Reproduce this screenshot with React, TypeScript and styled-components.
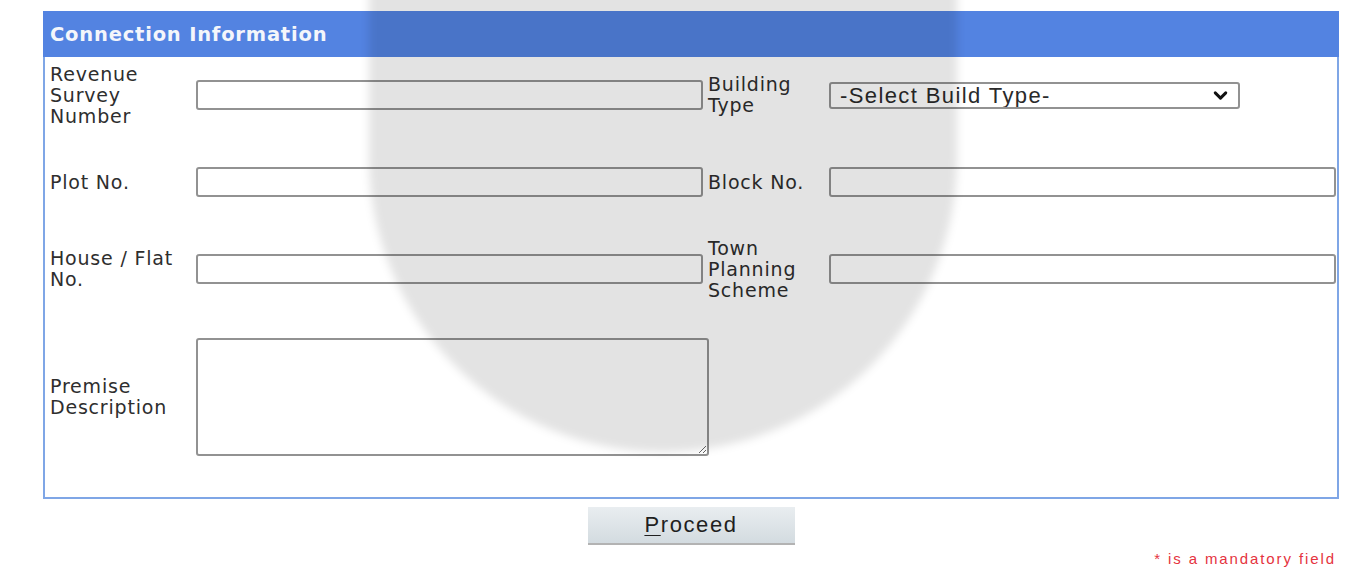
import React from 'react';
import styled, { createGlobalStyle } from 'styled-components';
import { ChevronDown } from 'lucide-react';

const GlobalStyle = createGlobalStyle`
  html, body {
    margin: 0;
    padding: 0;
    background: #ffffff;
  }
  body {
    font-family: "DejaVu Sans", Verdana, sans-serif;
    color: #2b2b2b;
  }
`;

const Page = styled.div`
  position: relative;
  width: 1353px;
  height: 576px;
  overflow: hidden;
  padding: 11px 0 0 43px;
  box-sizing: border-box;
`;

const Watermark = styled.div`
  position: absolute;
  left: 369px;
  top: -300px;
  width: 588px;
  height: 752px;
  border-radius: 294px;
  background: rgba(0, 0, 0, 0.11);
  filter: blur(4px);
  pointer-events: none;
  z-index: 2;
`;

const Panel = styled.div`
  width: 1296px;
  box-sizing: border-box;
  border: 2px solid #7fa6e6;
  border-top: none;
`;

const PanelHeader = styled.div`
  height: 46px;
  margin: 0 -2px;
  padding-left: 7px;
  display: flex;
  align-items: center;
  background: #5383e1;
  color: #f4f6fb;
  font-family: "DejaVu Sans", Verdana, sans-serif;
  font-weight: bold;
  font-size: 19.5px;
  letter-spacing: 0.8px;
`;

const FormGrid = styled.div`
  display: grid;
  grid-template-columns: 146px 512px 121px 507px;
  grid-template-rows: 64px 36px 64px 118px;
  row-gap: 37px;
  align-items: center;
  padding: 6px 1px 41px 5px;
`;

const Label = styled.label`
  font-size: 19px;
  line-height: 21px;
  letter-spacing: 0.8px;
  color: #2e2e2e;
`;

const TextInput = styled.input`
  width: 507px;
  height: 30px;
  box-sizing: border-box;
  border: 2px solid #929292;
  border-radius: 3px;
  background: transparent;
  font-size: 18px;
  padding: 0 6px;
  outline: none;
`;

const SelectWrap = styled.div`
  position: relative;
  width: 411px;
  height: 27px;
`;

const Select = styled.select`
  appearance: none;
  width: 100%;
  height: 100%;
  box-sizing: border-box;
  border: 2px solid #929292;
  border-radius: 3px;
  background: transparent;
  padding: 0 0 0 9px;
  font-family: "Liberation Sans", Arial, sans-serif;
  font-size: 22px;
  line-height: 23px;
  letter-spacing: 1.4px;
  color: #2a2a2a;
  outline: none;
`;

const Chevron = styled(ChevronDown)`
  position: absolute;
  right: 9px;
  top: 3px;
  pointer-events: none;
  color: #111;
`;

const TextArea = styled.textarea`
  width: 513px;
  height: 118px;
  box-sizing: border-box;
  border: 2px solid #929292;
  border-radius: 3px;
  background: transparent;
  font-size: 18px;
  outline: none;
`;

const Actions = styled.div`
  width: 1296px;
  display: flex;
  flex-direction: column;
  align-items: center;
  padding-top: 8px;
`;

const ProceedButton = styled.button`
  width: 207px;
  height: 38px;
  border: none;
  border-bottom: 2px solid #b3b3b3;
  background: linear-gradient(#e9edf0, #d3dbe0);
  font-family: "Liberation Sans", Arial, sans-serif;
  font-size: 22px;
  letter-spacing: 1.6px;
  color: #1f1f1f;
  cursor: pointer;
  padding: 0;

  u {
    text-decoration-thickness: 1px;
    text-underline-offset: 3px;
  }
`;

const MandatoryNote = styled.div`
  align-self: flex-end;
  margin-top: 5px;
  margin-right: 3px;
  font-family: "Liberation Sans", Arial, sans-serif;
  font-size: 15px;
  letter-spacing: 1.9px;
  line-height: 18px;
  color: #e53340;
`;

const App: React.FC = () => {
  return (
    <>
      <GlobalStyle />
      <Page>
        <Watermark />
        <Panel>
          <PanelHeader>Connection Information</PanelHeader>
          <FormGrid>
            <Label>
              Revenue<br />
              Survey<br />
              Number
            </Label>
            <TextInput type="text" />
            <Label>
              Building<br />
              Type
            </Label>
            <SelectWrap>
              <Select defaultValue="">
                <option value="">-Select Build Type-</option>
              </Select>
              <Chevron size={21} strokeWidth={3.4} />
            </SelectWrap>

            <Label>Plot No.</Label>
            <TextInput type="text" />
            <Label>Block No.</Label>
            <TextInput type="text" />

            <Label>
              House / Flat<br />
              No.
            </Label>
            <TextInput type="text" />
            <Label>
              Town<br />
              Planning<br />
              Scheme
            </Label>
            <TextInput type="text" />

            <Label>
              Premise<br />
              Description
            </Label>
            <TextArea />
          </FormGrid>
        </Panel>
        <Actions>
          <ProceedButton type="button">
            <u>P</u>roceed
          </ProceedButton>
          <MandatoryNote>* is a mandatory field</MandatoryNote>
        </Actions>
      </Page>
    </>
  );
};

export default App;
